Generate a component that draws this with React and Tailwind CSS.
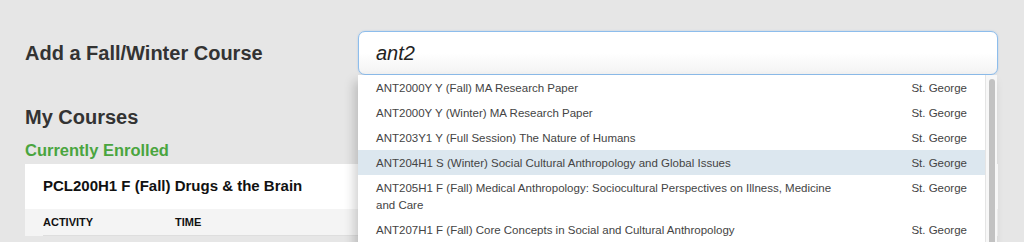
import React from 'react';

const results = [
  { id: 1, label: 'ANT2000Y Y (Fall) MA Research Paper', campus: 'St. George' },
  { id: 2, label: 'ANT2000Y Y (Winter) MA Research Paper', campus: 'St. George' },
  { id: 3, label: 'ANT203Y1 Y (Full Session) The Nature of Humans', campus: 'St. George' },
  { id: 4, label: 'ANT204H1 S (Winter) Social Cultural Anthropology and Global Issues', campus: 'St. George', active: true },
  { id: 5, label: 'ANT205H1 F (Fall) Medical Anthropology: Sociocultural Perspectives on Illness, Medicine and Care', campus: 'St. George' },
  { id: 6, label: 'ANT207H1 F (Fall) Core Concepts in Social and Cultural Anthropology', campus: 'St. George' },
];

const CourseSearch = () => {
  return (
    <div className="relative flex-1">
      <div className="h-[44px] rounded-[7px] border border-[#8dbdec] bg-gradient-to-b from-white via-white to-[#f3f3f3] flex items-center px-[17px] shadow-[0_0_2px_rgba(100,160,230,0.4)]">
        <span className="italic text-[20px] text-[#222]">ant2</span>
      </div>
      {/* Autocomplete list */}
      <div className="absolute left-0 right-[1px] top-[44px] h-[180px] bg-white flex shadow-[-4px_6px_10px_rgba(0,0,0,0.18)] z-10">
        <ul className="flex-1 text-[11.5px] text-[#444]">
          {results.map((r) => (
            <li
              key={r.id}
              className={`flex justify-between pl-[18px] pr-[18px] pt-[5px] pb-[3px] leading-[17px] ${r.active ? 'bg-[#dce7ef]' : ''}`}
            >
              <span className="w-[465px]">{r.label}</span>
              <span>{r.campus}</span>
            </li>
          ))}
        </ul>
        <div className="w-[12px] border-l border-[#e4e4e4] bg-[#f7f7f7] pt-[4px] flex justify-center">
          <div className="w-[6px] h-full rounded-full bg-[#c2c2c2]" />
        </div>
      </div>
    </div>
  );
};

const App = () => {
  return (
    <div className="min-h-[242px] bg-[#e6e6e6] font-['Liberation_Sans',Arial,sans-serif] text-[#333] pl-[25px] pr-[26px] pt-[31px] overflow-hidden">
      <div className="flex items-start">
        <h2 className="w-[333px] text-[20px] font-bold leading-[44px]">Add a Fall/Winter Course</h2>
        <CourseSearch />
      </div>

      <h2 className="mt-[29px] text-[20px] font-bold leading-[26px]">My Courses</h2>
      <h3 className="mt-[10px] text-[16.5px] font-bold text-[#4aa53f] leading-[20px]">Currently Enrolled</h3>

      <div className="mt-[4px] bg-white">
        <div className="px-[18px] h-[45px] flex items-center text-[15px] font-bold text-[#111]">
          PCL200H1 F (Fall) Drugs &amp; the Brain
        </div>
        <div className="bg-[#f4f4f4] px-[18px]">
          <div className="flex h-[27px] items-center border-b border-[#dedede] text-[11px] font-bold text-[#111]">
            <span className="w-[132px]">ACTIVITY</span>
            <span>TIME</span>
          </div>
        </div>
      </div>
    </div>
  );
};

export default App;
